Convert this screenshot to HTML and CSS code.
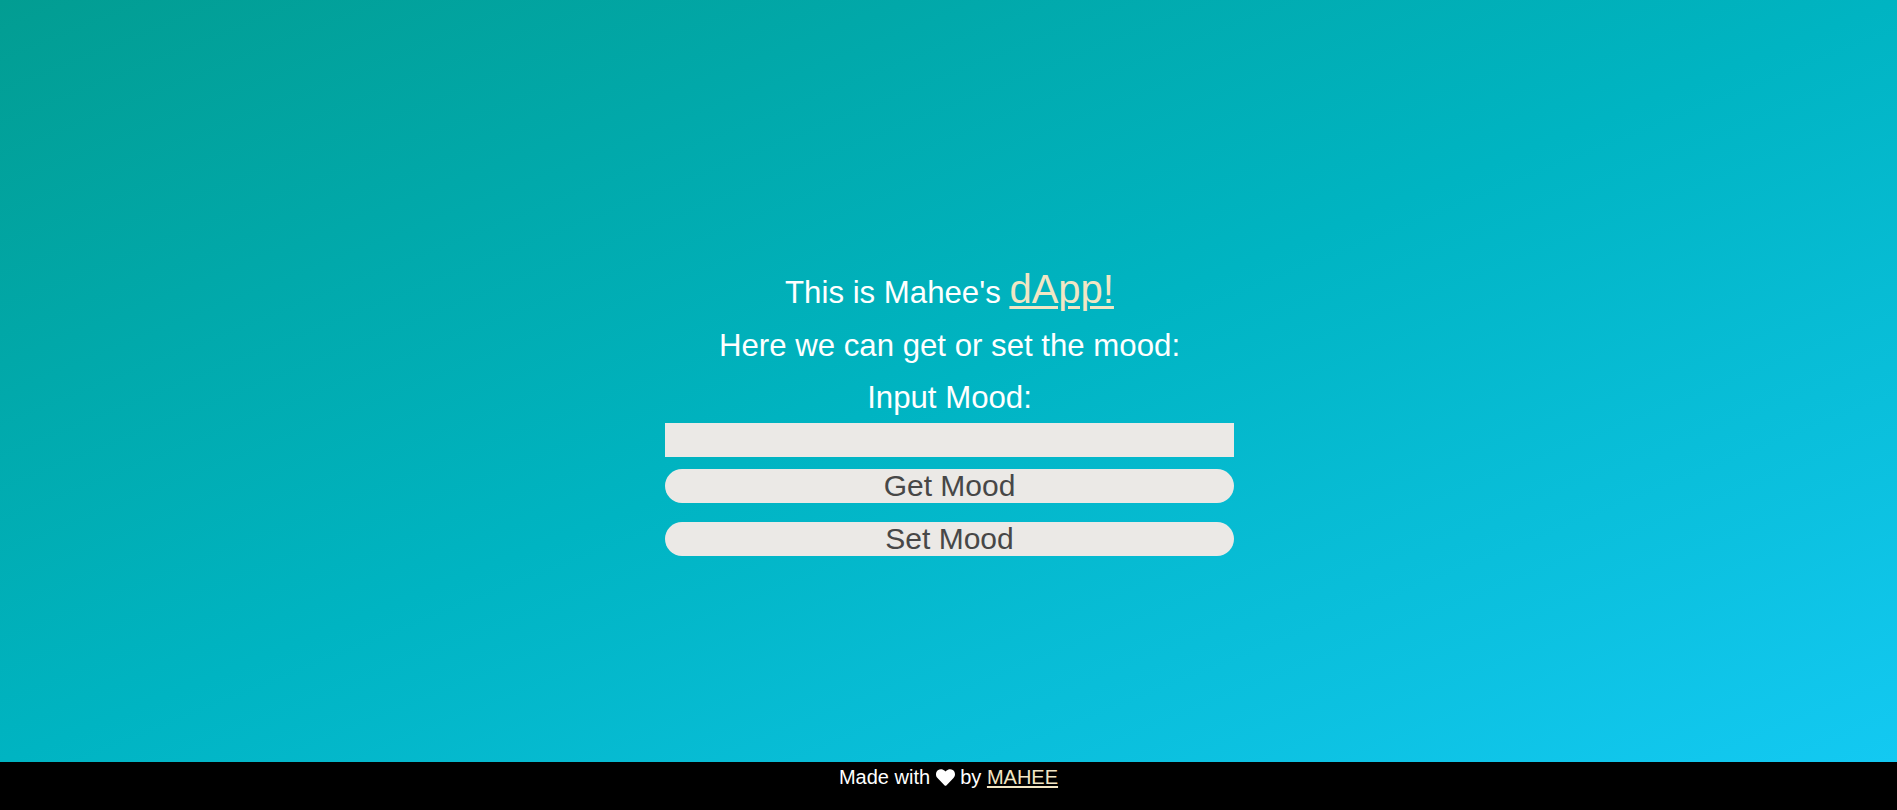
FILE: index.html
```html
<!DOCTYPE html>
<html lang="en">
<head>
<meta charset="utf-8">
<title>Mahee's dApp</title>
<link rel="stylesheet" href="styles.css">
</head>
<body>
<div class="page">
  <main class="main">
    <div class="content">
      <p class="title">This is Mahee's <a class="dapp" href="#">dApp!</a></p>
      <p class="line">Here we can get or set the mood:</p>
      <label class="line label" for="mood">Input Mood:</label>
      <input id="mood" class="mood-input" type="text">
      <button class="btn btn-get" type="button">Get Mood</button>
      <button class="btn btn-set" type="button">Set Mood</button>
    </div>
  </main>
  <footer class="footer">
    Made with <svg class="heart" viewBox="0 0 512 512" aria-hidden="true"><path d="M462.3 62.6C407.5 15.9 326 24.3 275.7 76.2L256 96.5l-19.7-20.3C186.1 24.3 104.5 15.9 49.7 62.6c-62.8 53.6-66.1 149.8-9.9 207.9l193.5 199.8c12.5 12.9 32.8 12.9 45.3 0l193.5-199.8c56.3-58.1 53-154.3-9.8-207.9z"/></svg> by <a class="author" href="#">MAHEE</a>
  </footer>
</div>
</body>
</html>
```

FILE: styles.css
```css
html, body {
  margin: 0;
  padding: 0;
}

body {
  font-family: "Liberation Sans", Arial, sans-serif;
  color: #ffffff;
  background: #000;
}

.page {
  display: flex;
  flex-direction: column;
  min-height: 100vh;
}

.main {
  height: 762px;
  box-sizing: border-box;
  padding-top: 267px;
  padding-left: 2px;
  display: flex;
  flex-direction: column;
  align-items: center;
  background: linear-gradient(to bottom right, #029d92 0%, #00b4c2 50%, #13c9f2 100%);
}

.content {
  width: 30vw;
  display: flex;
  flex-direction: column;
  align-items: stretch;
  text-align: center;
}

.title {
  margin: 0;
  font-size: 31.2px;
  line-height: 44px;
}

.dapp {
  font-size: 40px;
  color: #f2e6c4;
  text-decoration: underline;
  text-decoration-thickness: 3px;
  text-underline-offset: 3px;
}

.line {
  display: block;
  margin: 11px 0 0;
  font-size: 31.2px;
  line-height: 40px;
}

.label {
  margin-top: 12px;
}

.mood-input {
  display: block;
  margin: 5px 0 0;
  height: 34px;
  box-sizing: border-box;
  border: none;
  border-radius: 0;
  padding: 0 8px;
  background: #ebe9e6;
  font-family: inherit;
  font-size: 24px;
  color: #444;
  outline: none;
}

.btn {
  display: block;
  margin: 12px 0 0;
  height: 34px;
  padding: 0;
  border: none;
  border-radius: 17px;
  background: #ebe9e6;
  color: #474747;
  font-family: inherit;
  font-size: 30px;
  line-height: 32px;
  cursor: pointer;
}

.btn-set {
  margin-top: 19px;
}

.footer {
  height: 48px;
  box-sizing: border-box;
  padding-top: 4px;
  background: #000;
  color: #ffffff;
  text-align: center;
  font-size: 20px;
  line-height: 22px;
}

.heart {
  width: 19px;
  height: 19px;
  fill: #ffffff;
  vertical-align: -3px;
}

.author {
  color: #f2e6c4;
  text-decoration: underline;
  text-underline-offset: 2px;
}
```
